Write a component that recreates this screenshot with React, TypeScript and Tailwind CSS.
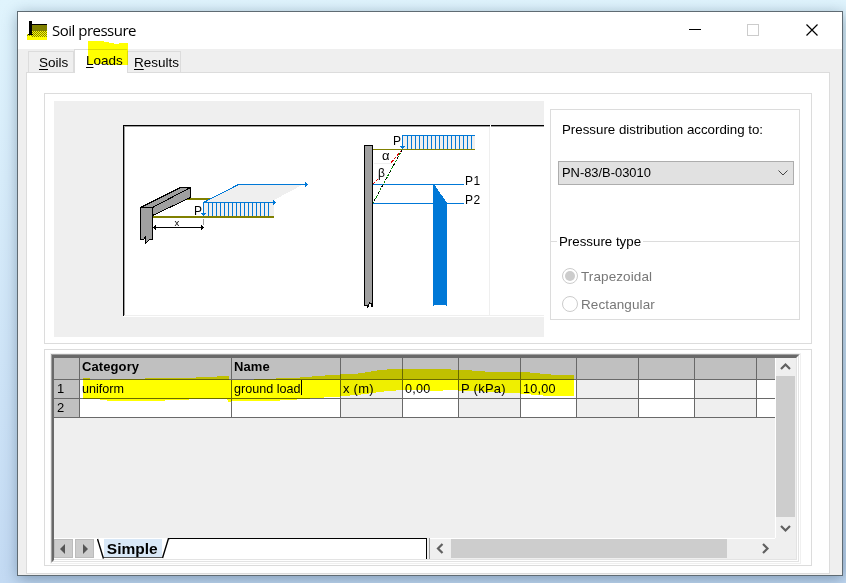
import { ReactNode } from 'react';

const BLUE = '#0078d7';
const OLIVE = '#808000';

function AppIcon() {
  return (
    <svg width="20" height="19" viewBox="0 0 20 19" shapeRendering="crispEdges" className="shrink-0">
      <defs>
        <pattern id="soil" width="2" height="2" patternUnits="userSpaceOnUse">
          <rect width="2" height="2" fill="#ffff00" />
          <rect width="1" height="1" fill="#808000" />
          <rect x="1" y="1" width="1" height="1" fill="#808000" />
        </pattern>
      </defs>
      <rect x="5" y="3" width="15" height="7" fill={OLIVE} />
      <rect x="5" y="3" width="15" height="1" fill="#000" />
      <rect x="0" y="13" width="20" height="6" fill="#ffff00" />
      <rect x="5" y="10" width="15" height="6" fill="url(#soil)" />
      <rect x="0" y="13" width="5" height="2" fill="url(#soil)" />
      <rect x="2" y="0" width="3" height="13" fill="#000" />
      <rect x="1" y="13" width="5" height="1" fill="#000" />
    </svg>
  );
}

function LoadDiagram() {
  const leftTicks = Array.from({ length: 16 }, (_, i) => 208 + i * 4);
  const rightTicks = Array.from({ length: 17 }, (_, i) => 407 + i * 4);

  return (
    <svg width="490" height="236" viewBox="54 101 490 236" shapeRendering="crispEdges" className="block">
      <rect x="123" y="125" width="421" height="192" fill="#fff" />
      <path d="M123 125h367v1H124v190h-1zM491 125h53v1h-53z" fill="#000" />
      <path d="M124 126h366v1H125v188h-1zM491 126h53v1h-53z" fill="#a0a0a0" />
      <path d="M124 315h420v1H124zM489 127h1v188h-1z" fill="#efefef" />

      {/* perspective view */}
      <rect x="187" y="198" width="24" height="2" fill={OLIVE} />
      <path d="M204 202L238 184H304L274 200V216H204Z" fill="#efefef" />
      <rect x="153" y="216" width="121" height="2" fill={OLIVE} />
      <g fill="#a0a0a0" stroke="#000">
        <path d="M140.500 207.500L180.500 187.500H190.500V197.500L152.500 215.500V239.500H149.500L145.500 243.500V236.500L143.500 239.500H140.500Z" />
        <path d="M140.500 207.500H152.500V216M152.500 207.500L190.500 187.500" fill="none" />
      </g>
      <g stroke={BLUE} fill="none">
        <path d="M203.500 202.500L238.500 184.500H306M203.500 202.500H275M203.500 202.500V215" />
        {leftTicks.map((x) => (
          <path key={x} d={`M${x + 0.5} 203V216`} />
        ))}
      </g>
      <path d="M305 182h1v1h1v1h1v1h-1v1h-1v1h-1zM273 200h1v1h1v1h1v1h-1v1h-1v1h-1zM201 213h5v1h-1v1h-1v1h-1v-1h-1v-1h-1z" fill={BLUE} />
      <path d="M203.500 219V225" stroke="#a0a0a0" />
      <rect x="154" y="227" width="49" height="1" fill="#000" />
      <path d="M153 227h1v-1h1v-1h1v5h-1v-1h-1v-1h-1zM201 225h1v1h1v1h1v1h-1v1h-1v1h-1z" fill="#000" />

      {/* cross-section */}
      <path d="M364.500 145.500H372.500V306H371.500V304L369.500 302.500L367.500 308V305.500H364.500Z" fill="#a0a0a0" stroke="#000" />
      <rect x="402" y="135" width="73" height="14" fill="#efefef" />
      <rect x="373" y="149" width="102" height="1" fill={OLIVE} />
      <g stroke={BLUE} fill="none">
        <path d="M475 135.500H402.500V148M373 184.500H464M373 203.500H464" />
        {rightTicks.map((x) => (
          <path key={x} d={`M${x + 0.5} 136V149`} />
        ))}
      </g>
      <path d="M400 146h5v1h-1v1h-1v1h-1v-1h-1v-1h-1z" fill={BLUE} />
      <path d="M374 163.500H391" stroke="#efefef" />
      <path d="M402 150L390 164M378 179L373 184" stroke="#e00000" strokeDasharray="3 1.500" />
      <path d="M402 150L373 203" stroke="#008000" />
      <path d="M402 150L373 203" stroke="#000" strokeDasharray="2 6" />
      <path d="M402 150L373 203" stroke="#fff" strokeDasharray="1 3" strokeDashoffset="2" />
      <path d="M433 184H434L447 203V306H446V305H434V306H433Z" fill={BLUE} />

      <g fontFamily="Liberation Sans, Arial, sans-serif" fontSize="12" fill="#000">
        <text x="194" y="215">P</text>
        <text x="393" y="145">P</text>
        <text x="465" y="185" letterSpacing="0.4">P1</text>
        <text x="465" y="204" letterSpacing="0.4">P2</text>
        <text x="174.500" y="226" fontSize="9.500">x</text>
        <text x="382" y="160" fontSize="13">α</text>
        <text x="378" y="177">β</text>
      </g>
    </svg>
  );
}

function Chevron({ dir }: { dir: 'up' | 'down' | 'left' | 'right' }) {
  const paths = {
    up: 'M1 7L5.500 2.500L10 7',
    down: 'M1 4L5.500 8.500L10 4',
    left: 'M7.500 1L3 5.500L7.500 10',
    right: 'M3 1L7.500 5.500L3 10',
  };
  return (
    <svg width="11" height="11" viewBox="0 0 11 11" fill="none" stroke="#606060" strokeWidth="2.2">
      <path d={paths[dir]} />
    </svg>
  );
}

function Radio({ label, checked = false }: { label: string; checked?: boolean }) {
  return (
    <div className="flex h-[28px] items-center text-[13.5px] text-[#777777]">
      <span className="mr-[3px] flex h-4 w-4 items-center justify-center rounded-full border border-[#cccccc]">
        {checked && <span className="h-[10px] w-[10px] rounded-full bg-[#cccccc]" />}
      </span>
      <span className="pt-[2px] tracking-[0.1px]">{label}</span>
    </div>
  );
}

function Cell({ className = '', children }: { className?: string; children?: ReactNode }) {
  return (
    <div className={`overflow-hidden whitespace-nowrap border-b border-r border-[#696969] pl-[2px] last:border-r-0 ${className}`}>
      {children}
    </div>
  );
}

const columns = 'grid grid-cols-[26px_152px_109px_62px_56px_62px_56px_62px_56px_62px_18px]';

const rows = [
  ['uniform', 'ground load', 'x (m)', '0,00', 'P (kPa)', '10,00', '', '', '', ''],
  ['', '', '', '', '', '', '', '', '', ''],
];

// every second cell from the third on holds a locked parameter name
const isLocked = (i: number) => i >= 2 && i % 2 === 0;

function LoadsTable() {
  const headers = ['', 'Category', 'Name', '', '', '', '', '', '', '', ''];
  return (
    <div className="h-[180px] w-[721px] bg-[#efefef] text-[12.6px]">
      <div className={`${columns} h-[22px]`}>
        {headers.map((h, i) => (
          <Cell key={i} className="bg-[#c0c0c0] text-[13px] font-bold leading-[18px] tracking-[0.1px]">{h}</Cell>
        ))}
      </div>
      {rows.map((row, r) => (
        <div key={r} className={`${columns} h-[19px] leading-[18px]`}>
          <Cell className="bg-[#c0c0c0] text-[13px] indent-px">{r + 1}</Cell>
          {row.map((value, i) => (
            <Cell key={i} className={`${isLocked(i) ? 'bg-[#efefef] text-[13px]' : 'bg-white'} ${i > 1 ? 'tracking-[0.25px]' : ''}`}>
              {r === 0 && i === 1 ? (
                <span className="inline-block h-[15px] border-r border-black leading-[18px]">{value}</span>
              ) : (
                value
              )}
            </Cell>
          ))}
        </div>
      ))}
    </div>
  );
}

function SheetBar() {
  return (
    <div className="flex h-[21px] w-[742px] bg-[#efefef]">
      <div className="flex w-[375px] bg-white">
        <div className="mt-px flex h-[19px] w-[19px] items-center justify-center border border-[#bcbcbc] bg-[#cccccc] pr-[2px]">
          <svg width="5" height="10" viewBox="0 0 5 10" fill="#555"><path d="M5 0V10L0 5Z" /></svg>
        </div>
        <div className="ml-[2px] mt-px flex h-[19px] w-[19px] items-center justify-center border border-[#bcbcbc] bg-[#cccccc] pl-[2px]">
          <svg width="5" height="10" viewBox="0 0 5 10" fill="#555"><path d="M0 0V10L5 5Z" /></svg>
        </div>
        <svg width="8" height="21" viewBox="0 0 8 21" className="ml-[3px]">
          <path d="M0.500 1L6.500 20.500" stroke="#000" strokeWidth="1.400" fill="none" />
        </svg>
        <div className="-ml-px mt-px h-[19px] w-[59px] border-b border-[#555] bg-[#d9e8f7] pl-[3px] text-[15.5px] font-bold leading-[19px]">
          Simple
        </div>
        <svg width="8" height="21" viewBox="0 0 8 21">
          <path d="M0.500 20L6.500 0.500H8" stroke="#000" strokeWidth="1.400" fill="none" />
        </svg>
        <div className="w-[258px] border-r border-t border-black" />
        <div className="w-[2px] bg-[#efefef]" />
      </div>
      <div className="h-full w-px bg-[#a0a0a0]" />
      <div className="flex h-full w-[345px] items-center border-t border-white pb-px">
        <div className="flex w-[21px] justify-center"><Chevron dir="left" /></div>
        <div className="h-[19px] w-[276px] self-start bg-[#cdcdcd]" />
        <div className="ml-[33px]"><Chevron dir="right" /></div>
      </div>
    </div>
  );
}

function VerticalScrollbar() {
  return (
    <div className="flex h-[180px] w-[21px] flex-col border-l border-white bg-[#efefef]">
      <div className="flex h-[18px] items-center justify-center pr-px"><Chevron dir="up" /></div>
      <div className="h-[141px] w-[19px] bg-[#cdcdcd]" />
      <div className="flex h-[21px] items-center justify-center pr-px"><Chevron dir="down" /></div>
    </div>
  );
}

// marker strokes over the tab and the first table row
function Highlights() {
  return (
    <svg width="846" height="583" viewBox="0 0 846 583" shapeRendering="crispEdges" className="pointer-events-none absolute left-0 top-0 z-20 mix-blend-multiply">
      <path fill="#ffff00" d="M88 41H104V42H109V43H114V44H119V43H128V65H108V64H88Z" />
      <path
        fill="#ffff00"
        d="M83 378H90V380H110V379H145V378H196V377H217V376H229V380H254V379H276V378H300V377H312V376H325V375H340V374H358V373H365V372H371V371H377V370H387V369H451V370H472V371H485V372H511V372H530V373H540V374H551V375H574V396H543V395H531V394H520V393H504V392H484V391H458V390H443V391H430V390H396V391H384V392H376V393H369V394H361V395H350V396H340V397H324V398H310V399H297V400H280V401H231V402H228V400H227V399H189V400H165V401H107V400H100V399H83Z"
      />
    </svg>
  );
}

export default function App() {
  return (
    <div className="relative h-[583px] w-[846px] overflow-hidden bg-linear-to-b from-[#e0f4fd] to-[#c3daf3] pl-[17px] pt-[11px] font-['Liberation_Sans',Arial,sans-serif] text-black">
      <div className="h-[565px] w-[826px] border border-[#5f6b73] bg-[#efefef] shadow-[1px_3px_14px_rgba(20,50,80,0.4)]">
        <header className="flex h-[37px] items-center bg-white pl-[9px]">
          <AppIcon />
          <span className="ml-[5px] font-['Open_Sans','Noto_Sans',sans-serif] text-[15px] tracking-[-0.5px]">Soil pressure</span>
          <svg width="132" height="14" viewBox="0 0 132 14" fill="none" className="-mt-px ml-auto mr-[22px]">
            <path d="M1 6.500H13" stroke="#000" shapeRendering="crispEdges" />
            <rect x="59.500" y="1.500" width="11" height="11" stroke="#cccccc" />
            <path d="M118.500 1.500L129.500 12.500M129.500 1.500L118.500 12.500" stroke="#000" strokeWidth="1.200" />
          </svg>
        </header>

        <nav className="flex h-[23px] items-end pl-[10px] text-[13.5px]">
          <div className="h-[21px] w-[46px] border border-b-0 border-[#dcdcdc] pl-[10px] leading-[22px]">
            <span className="underline underline-offset-2">S</span>oils
          </div>
          <div className="z-10 -mb-px h-[24px] w-[53px] border-l border-t border-[#dcdcdc] bg-white pl-[11px] leading-[22px]">
            <span className="underline underline-offset-2">L</span>oads
          </div>
          <div className="h-[21px] w-[54px] border border-b-0 border-[#dcdcdc] pl-[6px] leading-[22px]">
            <span className="underline underline-offset-2">R</span>esults
          </div>
        </nav>

        <main className="ml-[8px] h-[502px] w-[804px] border border-[#dcdcdc] bg-white pl-[17px] pt-[20px]">
          <section className="flex h-[251px] w-[768px] border border-[#dcdcdc] pl-[9px] pt-[7px]">
            <div className="h-[236px] w-[490px] bg-[#efefef]">
              <LoadDiagram />
            </div>
            <div className="ml-[6px] mt-[8px] flex h-[211px] w-[250px] flex-col border border-[#dcdcdc]">
              <div className="h-[51px] pl-[11px] pt-[11px] text-[13.3px] leading-[18px]">
                Pressure distribution according to:
              </div>
              <div className="ml-[7px] flex h-[24px] w-[236px] items-center justify-between border border-[#adadad] bg-[#e1e1e1] pl-[3px] pr-[5px] text-[12.9px]">
                <span>PN-83/B-03010</span>
                <svg width="10" height="6" viewBox="0 0 10 6" fill="none" stroke="#444">
                  <path d="M0.500 0.500L5 5L9.500 0.500" />
                </svg>
              </div>
              <div className="mt-[47px] flex h-[18px] items-center text-[13.3px]">
                <span className="h-px w-[6px] bg-[#dcdcdc]" />
                <span className="px-[2px] pt-[2px]">Pressure type</span>
                <span className="h-px grow bg-[#dcdcdc]" />
              </div>
              <div className="pl-[11px] pt-[12px]">
                <Radio label="Trapezoidal" checked />
                <Radio label="Rectangular" />
              </div>
            </div>
          </section>

          <section className="mt-[5px] h-[217px] w-[768px] border border-[#dcdcdc] pl-[5px] pt-[3px]">
            <div className="h-[211px] w-[751px] border border-[#f0f0f0]">
              <div className="border border-b-white border-l-[#a0a0a0] border-r-white border-t-[#a0a0a0]">
                <div className="border border-b-[#e3e3e3] border-l-[#696969] border-r-[#e3e3e3] border-t-[#696969]">
                  <div className="border border-b-white border-l-[#696969] border-r-white border-t-[#696969]">
                    <div className="border-b border-r border-t border-b-[#e3e3e3] border-r-[#e3e3e3] border-t-[#696969]">
                      <div className="flex">
                        <LoadsTable />
                        <VerticalScrollbar />
                      </div>
                      <SheetBar />
                    </div>
                  </div>
                </div>
              </div>
            </div>
          </section>
        </main>
      </div>
      <Highlights />
    </div>
  );
}
